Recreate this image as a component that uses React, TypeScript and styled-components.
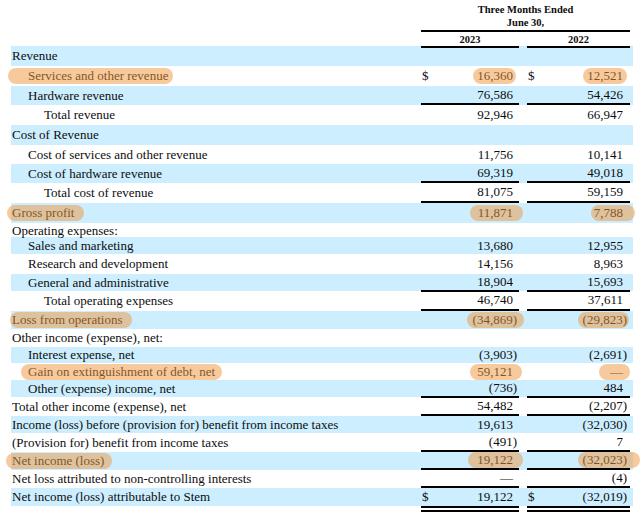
import React from 'react';
import styled, { createGlobalStyle } from 'styled-components';

const GlobalStyle = createGlobalStyle`
  html, body {
    margin: 0;
    padding: 0;
    background: #ffffff;
  }
  body {
    font-family: 'Liberation Serif', 'Times New Roman', serif;
    color: #0d0d0d;
  }
`;

const COLS = '410px 98px 8px 103px 1fr';
const STRIPE = '#cceeff';
const INK = '#000000';

const Page = styled.div`
  width: 622px;
  padding-left: 11px;
`;

const HeadRow = styled.div<{ $h: number }>`
  display: grid;
  grid-template-columns: ${COLS};
  height: ${(p) => p.$h}px;
  font-size: 10.5px;
  font-weight: 700;
  line-height: 13px;
`;

const Period = styled.div`
  grid-column: 2 / 5;
  text-align: center;
  padding-top: 3px;
  border-bottom: 2px solid ${INK};
`;

const Year = styled.div<{ $col: number }>`
  grid-column: ${(p) => p.$col};
  text-align: center;
  padding-top: 1px;
  border-bottom: 2px solid ${INK};
`;

const Row = styled.div<{ $h: number; $shaded: boolean }>`
  display: grid;
  grid-template-columns: ${COLS};
  height: ${(p) => p.$h}px;
  background: ${(p) => (p.$shaded ? STRIPE : 'transparent')};
  font-size: 13px;
  line-height: 16px;
`;

const Label = styled.div<{ $level: number }>`
  display: flex;
  align-items: center;
  padding-left: ${(p) => 1 + p.$level * 16}px;
  white-space: nowrap;
`;

const Cell = styled.div<{ $col: number; $ruled?: boolean }>`
  grid-column: ${(p) => p.$col};
  display: flex;
  align-items: center;
  padding: 0 ${(p) => (p.$col === 2 ? 6 : 7)}px 0 1px;
  border-bottom: ${(p) => (p.$ruled ? `2px solid ${INK}` : 'none')};
  white-space: nowrap;
`;

// double underline under the grand total
const TotalRules = styled.div`
  display: grid;
  grid-template-columns: ${COLS};
  height: 6px;
`;

const DoubleRule = styled.div<{ $col: number }>`
  grid-column: ${(p) => p.$col};
  border-top: 2px solid ${INK};
  border-bottom: 2px solid ${INK};
`;

const Dollar = styled.span`
  margin-right: auto;
`;

const Num = styled.span<{ $neg: boolean }>`
  margin-left: auto;
  margin-right: ${(p) => (p.$neg ? -4 : 0)}px;
`;

const Pill = styled.span<{ $l: number; $r: number }>`
  position: relative;
  display: inline-block;
  line-height: 16px;
  &::after {
    content: '';
    position: absolute;
    top: 0;
    bottom: 0;
    left: ${(p) => -p.$l}px;
    right: ${(p) => -p.$r}px;
    border-radius: 8px;
    background: rgba(240, 150, 60, 0.5);
  }
`;

type Pad = [number, number];

interface Line {
  label: string;
  level: number;
  h: number;
  a?: string;
  b?: string;
  dollar?: boolean;
  ruled?: boolean;
  hl?: { label: Pad; a: Pad; b: Pad };
}

const rows: Line[] = [
  { label: 'Revenue', level: 0, h: 20 },
  {
    label: 'Services and other revenue', level: 1, h: 20, dollar: true, a: '16,360', b: '12,521',
    hl: { label: [20, 5], a: [4, 3], b: [4, 4] },
  },
  { label: 'Hardware revenue', level: 1, h: 19, a: '76,586', b: '54,426', ruled: true },
  { label: 'Total revenue', level: 2, h: 20, a: '92,946', b: '66,947' },
  { label: 'Cost of Revenue', level: 0, h: 20 },
  { label: 'Cost of services and other revenue', level: 1, h: 19, a: '11,756', b: '10,141' },
  { label: 'Cost of hardware revenue', level: 1, h: 19, a: '69,319', b: '49,018', ruled: true },
  { label: 'Total cost of revenue', level: 2, h: 20, a: '81,075', b: '59,159', ruled: true },
  {
    label: 'Gross profit', level: 0, h: 20, a: '11,871', b: '7,788',
    hl: { label: [5, 10], a: [8, 10], b: [3, 12] },
  },
  { label: 'Operating expenses:', level: 0, h: 14 },
  { label: 'Sales and marketing', level: 1, h: 17, a: '13,680', b: '12,955' },
  { label: 'Research and development', level: 1, h: 20, a: '14,156', b: '8,963' },
  { label: 'General and administrative', level: 1, h: 17, a: '18,904', b: '15,693', ruled: true },
  { label: 'Total operating expenses', level: 2, h: 20, a: '46,740', b: '37,611', ruled: true },
  {
    label: 'Loss from operations', level: 0, h: 18, a: '(34,869)', b: '(29,823)',
    hl: { label: [2, 10], a: [6, 7], b: [5, 2] },
  },
  { label: 'Other income (expense), net:', level: 0, h: 18 },
  { label: 'Interest expense, net', level: 1, h: 16, a: '(3,903)', b: '(2,691)' },
  {
    label: 'Gain on extinguishment of debt, net', level: 1, h: 17, a: '59,121', b: '—',
    hl: { label: [7, 7], a: [7, 9], b: [11, 7] },
  },
  { label: 'Other (expense) income, net', level: 1, h: 17, a: '(736)', b: '484', ruled: true },
  { label: 'Total other income (expense), net', level: 0, h: 19, a: '54,482', b: '(2,207)', ruled: true },
  { label: 'Income (loss) before (provision for) benefit from income taxes', level: 0, h: 17, a: '19,613', b: '(32,030)' },
  { label: '(Provision for) benefit from income taxes', level: 0, h: 19, a: '(491)', b: '7', ruled: true },
  {
    label: 'Net income (loss)', level: 0, h: 18, a: '19,122', b: '(32,023)', ruled: true,
    hl: { label: [6, 8], a: [9, 10], b: [5, 13] },
  },
  { label: 'Net loss attributed to non-controlling interests', level: 0, h: 18, a: '—', b: '(4)', ruled: true },
  { label: 'Net income (loss) attributable to Stem', level: 0, h: 18, dollar: true, a: '19,122', b: '(32,019)' },
];

const Amount: React.FC<{ col: number; value?: string; dollar?: boolean; ruled?: boolean; hl?: Pad }> = ({
  col,
  value,
  dollar,
  ruled,
  hl,
}) => (
  <Cell $col={col} $ruled={ruled}>
    {dollar && <Dollar>$</Dollar>}
    {value && (
      <Num $neg={value.startsWith('(')}>
        {hl ? (
          <Pill $l={hl[0]} $r={hl[1]}>
            {value}
          </Pill>
        ) : (
          value
        )}
      </Num>
    )}
  </Cell>
);

export default function App() {
  return (
    <Page>
      <GlobalStyle />
      <HeadRow $h={32}>
        <Period>
          Three Months Ended
          <br />
          June 30,
        </Period>
      </HeadRow>
      <HeadRow $h={14}>
        <Year $col={2}>2023</Year>
        <Year $col={4}>2022</Year>
      </HeadRow>
      {rows.map((r, i) => (
        <Row key={r.label} $h={r.h} $shaded={i % 2 === 0}>
          <Label $level={r.level}>
            {r.hl ? (
              <Pill $l={r.hl.label[0]} $r={r.hl.label[1]}>
                {r.label}
              </Pill>
            ) : (
              r.label
            )}
          </Label>
          <Amount col={2} value={r.a} dollar={r.dollar} ruled={r.ruled} hl={r.hl?.a} />
          <Amount col={4} value={r.b} dollar={r.dollar} ruled={r.ruled} hl={r.hl?.b} />
        </Row>
      ))}
      <TotalRules>
        <DoubleRule $col={2} />
        <DoubleRule $col={4} />
      </TotalRules>
    </Page>
  );
}
